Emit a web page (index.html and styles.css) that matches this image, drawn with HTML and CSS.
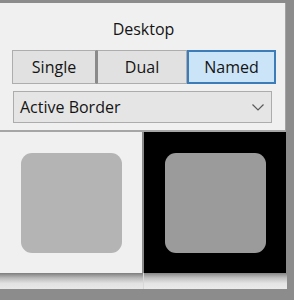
FILE: index.html
```html
<!DOCTYPE html>
<html>
<head>
<meta charset="utf-8">
<link rel="stylesheet" href="styles.css">
</head>
<body>
<div class="window">
  <div class="panel">
    <div class="title">Desktop</div>
    <div class="segmented">
      <button class="seg seg-single">Single</button>
      <button class="seg seg-dual">Dual</button>
      <button class="seg seg-named active">Named</button>
    </div>
    <div class="select">
      <span class="select-text">Active Border</span>
      <svg class="chev" width="12" height="7" viewBox="0 0 12 7"><path d="M0.5 0.5 L6 6 L11.5 0.5" fill="none" stroke="#5a5a5a" stroke-width="1.2"/></svg>
    </div>
  </div>
  <div class="swatches">
    <div class="swatch light"><div class="tile"></div></div>
    <div class="swatch dark"><div class="tile"></div></div>
  </div>
  <div class="footer">
    <div class="foot-l"></div>
    <div class="foot-r"></div>
  </div>
</div>
</body>
</html>
```

FILE: styles.css
```css
html, body {
  margin: 0;
  padding: 0;
}
body {
  background: #8c8c8c;
  width: 294px;
  height: 300px;
  overflow: hidden;
  font-family: "Open Sans", "Noto Sans", sans-serif;
  color: #141414;
}
.window {
  margin-top: 3px;
  width: 286px;
}
.panel {
  background: #f0f0f0;
  width: 285px;
  border-right: 1px solid #a3a3a3;
  height: 127px;
  border-bottom: 2px solid #a6a6a6;
  box-sizing: content-box;
}
.title {
  height: 47px;
  box-sizing: border-box;
  padding-top: 16px;
  padding-left: 2px;
  text-align: center;
  font-size: 16px;
  line-height: 20px;
}
.segmented {
  display: flex;
  margin-left: 12px;
  width: 265px;
  height: 34px;
}
.seg {
  font-family: inherit;
  font-size: 16px;
  color: #141414;
  background: #e1e1e1;
  border: 1px solid #adadad;
  margin: 0;
  padding: 0;
  height: 34px;
  box-sizing: border-box;
}
.seg-single {
  width: 85px;
  border-right: 2px solid #8a8a8a;
}
.seg-dual {
  width: 90px;
  border-left: 1px solid #8a8a8a;
}
.seg-named {
  width: 89px;
}
.seg.active {
  background: #cce4f7;
  border: 2px solid #3c7cb8;
}
.select {
  margin: 7px 0 0 13px;
  width: 259px;
  height: 32px;
  box-sizing: border-box;
  background: #e5e5e5;
  border: 1px solid #acacac;
  display: flex;
  align-items: center;
  justify-content: space-between;
  padding: 0 7px 0 6px;
}
.select-text {
  font-size: 16px;
  line-height: 20px;
}
.chev {
  margin-top: 1px;
}
.swatches {
  display: flex;
  height: 141px;
  width: 286px;
}
.swatch {
  display: flex;
  align-items: center;
  justify-content: center;
  height: 141px;
}
.swatch.light {
  width: 142px;
  background: #f0f0f0;
  border-right: 2px solid #8a8a8a;
}
.swatch.dark {
  width: 142px;
  background: #000;
}
.tile {
  width: 101px;
  height: 100px;
  border-radius: 11px;
}
.light .tile {
  background: #b4b4b4;
}
.dark .tile {
  background: #9b9b9b;
}
.footer {
  display: flex;
  height: 16px;
  width: 287px;
}
.foot-l {
  width: 143px;
  background: linear-gradient(#7d7d7d, #b8b8b8 30%, #e2e2e2 65%, #e8e8e8);
}
.foot-r {
  width: 144px;
  border-left: 1px solid #d8d8d8;
  background: linear-gradient(#858585, #c0c0c0 30%, #e4e4e4 65%, #eaeaea);
}
```
